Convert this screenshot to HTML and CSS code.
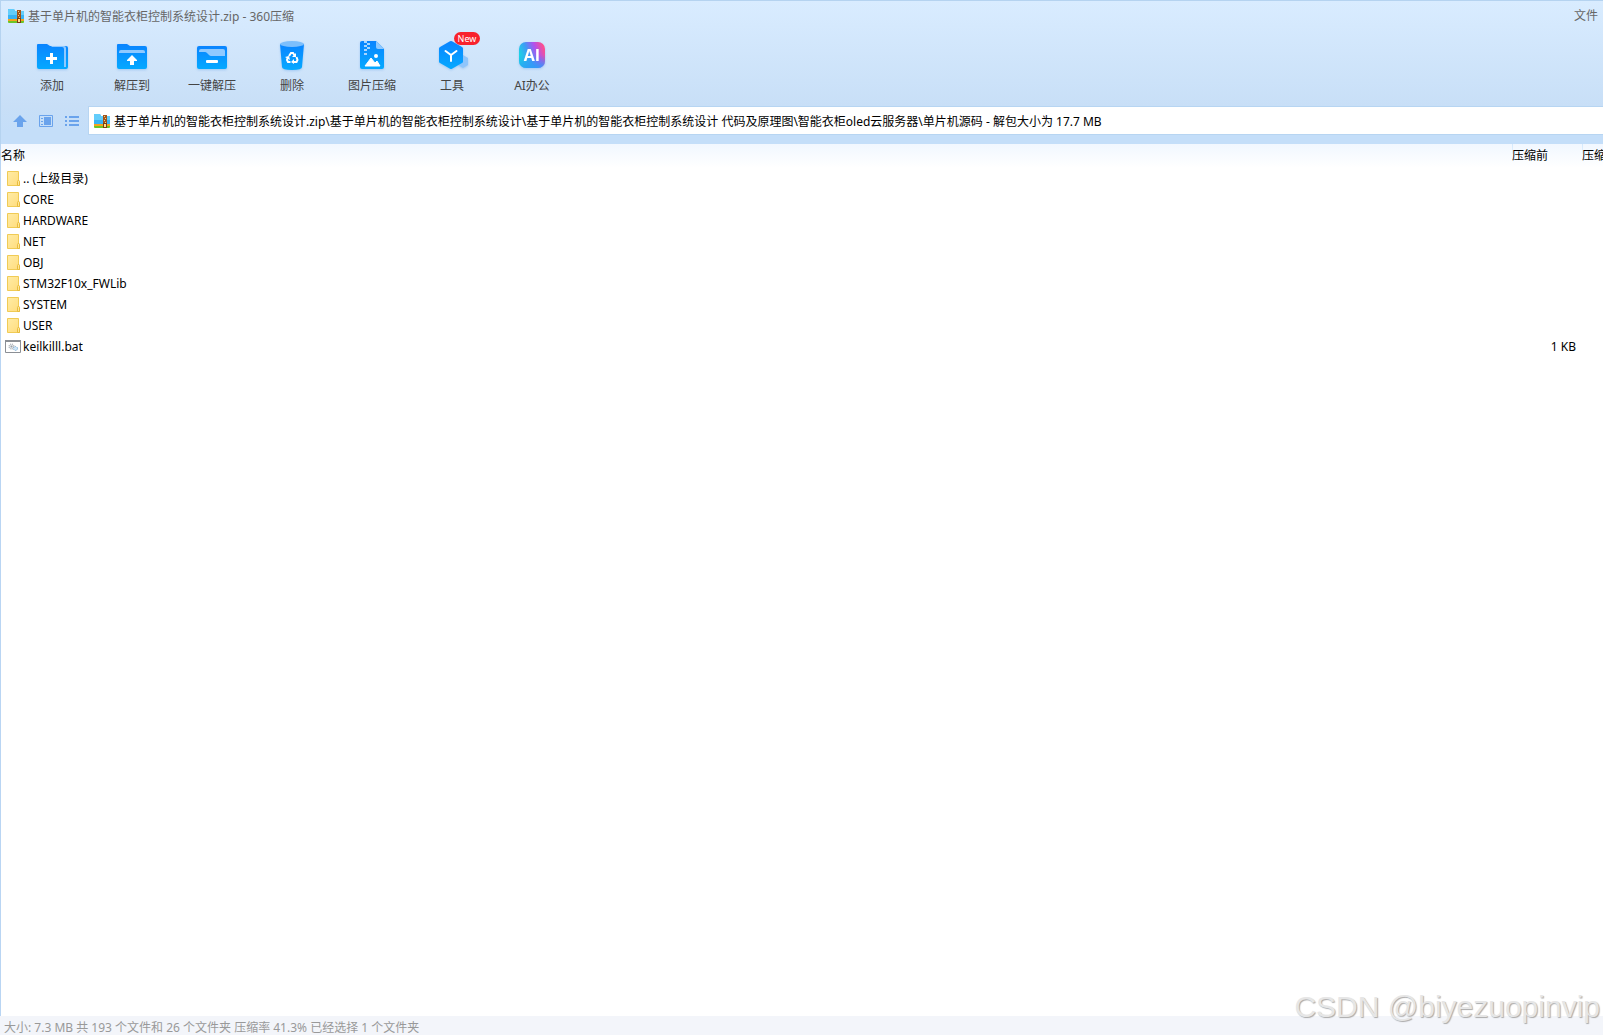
FILE: index.html
```html
<!DOCTYPE html>
<html lang="zh-CN">

<head>
    <meta charset="UTF-8">
    <meta name="viewport" content="width=device-width, initial-scale=1.0">
    <title>基于单片机的智能衣柜控制系统设计.zip - 360压缩</title>
    <link rel="stylesheet" href="styles.css">
</head>

<body>
    <!-- shared icons -->
    <svg class="defs" width="0" height="0" aria-hidden="true">
        <defs>
            <linearGradient id="blue" x1="0" y1="0" x2="0" y2="1">
                <stop offset="0" stop-color="#0a84ff" />
                <stop offset="1" stop-color="#05a9ff" />
            </linearGradient>
            <linearGradient id="ai" x1="0" y1="0.7" x2="1" y2="0.3">
                <stop offset="0" stop-color="#12e3e0" />
                <stop offset="0.4" stop-color="#3f9bf5" />
                <stop offset="0.7" stop-color="#b052ee" />
                <stop offset="1" stop-color="#ff4f8b" />
            </linearGradient>
            <linearGradient id="ai-low" x1="0" y1="0" x2="0" y2="1">
                <stop offset="0.5" stop-color="#2f8ff8" stop-opacity="0" />
                <stop offset="1" stop-color="#2f9cf8" stop-opacity="0.9" />
            </linearGradient>
            <linearGradient id="yellow" x1="0" y1="0" x2="1" y2="1">
                <stop offset="0" stop-color="#ffeca6" />
                <stop offset="1" stop-color="#ffdc7c" />
            </linearGradient>
        </defs>
        <symbol id="zip" viewBox="0 0 16 16">
            <path d="M0 2q0-1 1-1h5l1 2h8q1 0 1 1v8H0z" fill="#38b3f5" />
            <path d="M0 2q0-1 1-1h5l1 2h8q1 0 1 1v3H0z" fill="#63cdfb" />
            <path d="M0 11h16v2H0z" fill="#f5a31c" />
            <path d="M0 13h16v1q0 1-1 1H1q-1 0-1-1z" fill="#6cc526" />
            <path d="M9 2h4v9H9z" fill="#a1541b" />
            <path d="M10 3h1v1h-1zm1 2h1v1h-1zm-1 2h1v1h-1zm1 2h1v1h-1z" fill="#f3cb7c" />
            <path d="M9 10h4v5H9z" fill="#7a3d12" />
            <path d="M10 11h2v3h-2z" fill="#ffe08a" />
        </symbol>
        <symbol id="folder" viewBox="0 0 16 16">
            <path d="M2.500.500h11v9l1 1v4h-12z" fill="url(#yellow)" stroke="#f0cb55" />
            <path d="M12.500 14.500v-4l1-1.500 1 1.500v4z" fill="#ffe596" stroke="#e8bd3f" />
        </symbol>
    </svg>

    <header class="top">
        <div class="titlebar">
            <svg class="small-icon" aria-hidden="true"><use href="#zip" /></svg>
            <h1>基于单片机的智能衣柜控制系统设计.zip - 360压缩</h1>
            <button type="button" class="menu">文件</button>
        </div>

        <nav class="toolbar">
            <button type="button" class="tool">
                <svg viewBox="0 0 32 32" aria-hidden="true">
                    <path d="M1 7q0-1 1-1h9l3 2h16q2 0 2 2v19q0 2-2 2H3q-2 0-2-2z" fill="url(#blue)" />
                    <path d="M15 8h13q2 0 2 2v19h-2V11q0-2-2-2H16z" fill="#8fc9ff" />
                    <path d="M14 15h3v4h4v3h-4v4h-3v-4h-4v-3h4z" fill="#fff" />
                </svg>
                <span>添加</span>
            </button>
            <button type="button" class="tool">
                <svg viewBox="0 0 32 32" aria-hidden="true">
                    <path d="M1 7q0-1 1-1h9l3 2h15q2 0 2 2v19q0 2-2 2H3q-2 0-2-2z" fill="url(#blue)" />
                    <path d="M3 15v-1q0-2 2-2h22q2 0 2 2v1z" fill="#8fc9ff" />
                    <path d="M16 17l5 5v1h-3v4h-4v-4h-3v-1z" fill="#fff" />
                </svg>
                <span>解压到</span>
            </button>
            <button type="button" class="tool">
                <svg viewBox="0 0 32 32" aria-hidden="true">
                    <path d="M1 10q0-2 2-2h26q2 0 2 2v19q0 2-2 2H3q-2 0-2-2z" fill="url(#blue)" />
                    <path d="M3 13q0-2 2-2h22q2 0 2 2v5H15q-1 0-2-1l-2-2q-1-1-2-1H3z" fill="#8fc9ff" />
                    <rect x="10" y="22" width="12" height="3" rx="1" fill="#fff" />
                </svg>
                <span>一键解压</span>
            </button>
            <button type="button" class="tool">
                <svg viewBox="0 0 32 32" aria-hidden="true">
                    <path d="M4 6h24l-2 23q0 3-10 3T6 29z" fill="url(#blue)" />
                    <ellipse cx="16" cy="6" rx="12" ry="3" fill="#7dbffc" />
                    <g fill="none" stroke="#fff" stroke-width="2">
                        <path d="M13 18l2-3h2l2 3" />
                        <path d="M20.500 19l1 3-1 2h-3.500" />
                        <path d="M14.500 24H12l-1-2 1-3" />
                    </g>
                    <path d="M20 15v4h-4zM18 21v5l-3-2zM9 19l4-1 1 4z" fill="#fff" />
                </svg>
                <span>删除</span>
            </button>
            <button type="button" class="tool">
                <svg viewBox="0 0 32 32" aria-hidden="true">
                    <path d="M4 5q0-2 2-2h14l8 8v18q0 2-2 2H6q-2 0-2-2z" fill="url(#blue)" />
                    <path d="M20 3l8 8h-6q-2 0-2-2z" fill="#8fc9ff" />
                    <path d="M8 3h3v2H8zm3 2h3v2h-3zM8 7h3v2H8zm3 2h3v2h-3zM8 11h3v2H8zm0 4h3v2H8z" fill="#a8d5ff" />
                    <circle cx="20" cy="18" r="2" fill="#fff" />
                    <path d="M9 28l6-8 4 5 2-2 3 5z" fill="#fff" stroke="#fff" stroke-linejoin="round" />
                </svg>
                <span>图片压缩</span>
            </button>
            <button type="button" class="tool">
                <svg viewBox="0 0 32 32" aria-hidden="true">
                    <path d="M27 17l5 3v7l-5 3-5-3v-7z" fill="#8fc5fb" />
                    <path d="M15 3q.5 0 1 .3l10 5.700q1 .5 1 1.500v13q0 1-1 1.500l-10 5.700q-1 .5-2 0L4 25q-1-.5-1-1.500v-13Q3 9.500 4 9l10-5.700q.5-.3 1-.3z" fill="url(#blue)" />
                    <path d="M9.500 13l5.500 4 5.500-4M15 17v6" fill="none" stroke="#fff" stroke-width="2" stroke-linecap="round" />
                </svg>
                <span>工具</span>
                <em class="badge">New</em>
            </button>
            <button type="button" class="tool">
                <svg viewBox="0 0 32 32" aria-hidden="true">
                    <rect x="3" y="4" width="26" height="26" rx="7" fill="url(#ai)" />
                    <rect x="3" y="4" width="26" height="26" rx="7" fill="url(#ai-low)" />
                    <text x="16" y="23" class="ai-mark">AI</text>
                </svg>
                <span>AI办公</span>
            </button>
        </nav>

        <div class="location">
            <button type="button" class="nav-btn" aria-label="上级目录">
                <svg viewBox="0 0 14 14" aria-hidden="true">
                    <path d="M7 1l7 7h-4v5H4V8H0z" fill="#6aa3ec" />
                </svg>
            </button>
            <button type="button" class="nav-btn" aria-label="预览">
                <svg viewBox="0 0 14 14" aria-hidden="true">
                    <path d="M.5 1.500h13v11H.5z" fill="none" stroke="#6aa3ec" />
                    <path d="M2 4h2v1H2zm0 3h2v1H2zm0 3h2v1H2zM5 3h7v8H5z" fill="#6aa3ec" />
                </svg>
            </button>
            <button type="button" class="nav-btn" aria-label="列表">
                <svg viewBox="0 0 14 14" aria-hidden="true">
                    <path d="M0 2h2v2H0zm4 0h10v2H4zM0 6h2v2H0zm4 0h10v2H4zM0 10h2v2H0zm4 0h10v2H4z" fill="#6aa3ec" />
                </svg>
            </button>
            <label class="address">
                <svg class="small-icon" aria-hidden="true"><use href="#zip" /></svg>
                <input type="text" aria-label="路径" value="基于单片机的智能衣柜控制系统设计.zip\基于单片机的智能衣柜控制系统设计\基于单片机的智能衣柜控制系统设计 代码及原理图\智能衣柜oled云服务器\单片机源码 - 解包大小为 17.7 MB">
            </label>
        </div>
    </header>

    <main class="files">
        <table>
            <thead>
                <tr>
                    <th>名称</th>
                    <th class="before">压缩前</th>
                    <th class="after">压缩</th>
                </tr>
            </thead>
            <tbody>
                <tr>
                    <td><div class="name"><svg class="small-icon" aria-hidden="true"><use href="#folder" /></svg>.. (上级目录)</div></td>
                    <td></td>
                    <td></td>
                </tr>
                <tr>
                    <td><div class="name"><svg class="small-icon" aria-hidden="true"><use href="#folder" /></svg>CORE</div></td>
                    <td></td>
                    <td></td>
                </tr>
                <tr>
                    <td><div class="name"><svg class="small-icon" aria-hidden="true"><use href="#folder" /></svg>HARDWARE</div></td>
                    <td></td>
                    <td></td>
                </tr>
                <tr>
                    <td><div class="name"><svg class="small-icon" aria-hidden="true"><use href="#folder" /></svg>NET</div></td>
                    <td></td>
                    <td></td>
                </tr>
                <tr>
                    <td><div class="name"><svg class="small-icon" aria-hidden="true"><use href="#folder" /></svg>OBJ</div></td>
                    <td></td>
                    <td></td>
                </tr>
                <tr>
                    <td><div class="name"><svg class="small-icon" aria-hidden="true"><use href="#folder" /></svg>STM32F10x_FWLib</div></td>
                    <td></td>
                    <td></td>
                </tr>
                <tr>
                    <td><div class="name"><svg class="small-icon" aria-hidden="true"><use href="#folder" /></svg>SYSTEM</div></td>
                    <td></td>
                    <td></td>
                </tr>
                <tr>
                    <td><div class="name"><svg class="small-icon" aria-hidden="true"><use href="#folder" /></svg>USER</div></td>
                    <td></td>
                    <td></td>
                </tr>
                <tr>
                    <td>
                        <div class="name">
                            <svg class="small-icon" viewBox="0 0 16 16" aria-hidden="true">
                                <path d="M.5 1.500h15v12H.5z" fill="#fff" stroke="#8b8f95" />
                                <path d="M0 1h16v2H0z" fill="#8b8f95" />
                                <circle cx="6.500" cy="7.500" r="2.500" fill="#e4e8ec" stroke="#8d949c" stroke-dasharray="1 1" />
                                <circle cx="6.500" cy="7.500" r="1" fill="#9aa1a8" />
                                <circle cx="10.500" cy="9.500" r="2" fill="#cfe6f8" stroke="#6fa8d4" stroke-dasharray="1 1" />
                            </svg>keilkilll.bat
                        </div>
                    </td>
                    <td class="size">1 KB</td>
                    <td></td>
                </tr>
            </tbody>
        </table>
    </main>

    <footer class="status">大小: 7.3 MB 共 193 个文件和 26 个文件夹 压缩率 41.3% 已经选择 1 个文件夹</footer>

    <div class="watermark">CSDN @biyezuopinvip</div>
</body>

</html>
```
FILE: styles.css
```css
* {
    box-sizing: border-box;
}

body {
    display: flex;
    flex-direction: column;
    min-height: 100vh;
    margin: 0;
    overflow-x: hidden;
    font-family: "Noto Sans", "Noto Sans CJK SC", sans-serif;
    font-size: 12px;
    line-height: 16px;
    color: #000;
    background: #fff;
}

button,
input {
    margin: 0;
    padding: 0;
    border: none;
    background: none;
    font: inherit;
    color: inherit;
}

button {
    cursor: pointer;
}

.defs {
    position: absolute;
}

.small-icon {
    flex: none;
    width: 16px;
    height: 16px;
}

/* title, toolbar and address */
.top {
    border-top: 1px solid #b5d3f0;
    border-left: 1px solid #b5d3f0;
    background: linear-gradient(#d9ecff, #c8dff7 105px, #c4def9 130px);
}

.titlebar {
    display: flex;
    align-items: center;
    gap: 4px;
    height: 30px;
    padding: 0 5px 0 7px;
    color: #666;
}

.titlebar h1 {
    flex: 1;
    margin: 0;
    padding-top: 2px;
    font-size: 12px;
    font-weight: normal;
}

.toolbar {
    display: flex;
    height: 75px;
    padding: 7px 0 0 11px;
}

.tool {
    position: relative;
    display: flex;
    flex-direction: column;
    align-items: center;
    gap: 8px;
    width: 80px;
    color: #444;
}

.tool svg {
    width: 32px;
    height: 32px;
    filter: drop-shadow(0 1px 1px rgba(60, 140, 230, 0.3));
}

.ai-mark {
    font-family: "Open Sans", sans-serif;
    font-size: 16px;
    font-weight: bold;
    text-anchor: middle;
    fill: #fff;
}

.badge {
    position: absolute;
    top: -6px;
    left: 42px;
    width: 26px;
    height: 13px;
    border-radius: 7px;
    background: #f8222c;
    font-size: 9px;
    font-style: normal;
    line-height: 13px;
    text-align: center;
    color: #fff;
}

.location {
    display: flex;
    align-items: center;
    gap: 12px;
    padding: 0 0 9px 12px;
}

.nav-btn {
    width: 14px;
    height: 14px;
}

.nav-btn svg {
    display: block;
    width: 14px;
    height: 14px;
}

.address {
    display: flex;
    flex: 1;
    align-items: center;
    gap: 4px;
    height: 29px;
    margin-left: -3px;
    padding-left: 5px;
    border: 1px solid #b7d5f2;
    border-right: none;
    background: #fff;
}

.address input {
    flex: 1;
    min-width: 0;
    padding-top: 2px;
    outline: none;
}

/* file list */
.files {
    flex: 1;
    border-left: 1px solid #b9d5f3;
}

table {
    width: 100%;
    table-layout: fixed;
    border-collapse: collapse;
}

thead {
    background: linear-gradient(#f1f7ff, #fff);
}

th {
    height: 24px;
    padding: 0;
    font-weight: normal;
    text-align: left;
    white-space: nowrap;
    overflow: hidden;
}

.before,
.after {
    background: linear-gradient(#d3e8fc, #e8f3fe) no-repeat left top / 1px 10px;
}

.before {
    width: 70px;
}

.after {
    width: 21px;
}

td {
    height: 21px;
    padding: 0;
}

.name {
    display: flex;
    align-items: center;
    gap: 2px;
    padding-left: 4px;
}

.size {
    padding-right: 6px;
    text-align: right;
}

.status {
    height: 19px;
    padding: 4px 4px 0;
    overflow: hidden;
    background: #f3f5fa;
    color: #999;
}

.watermark {
    position: absolute;
    right: 3px;
    bottom: 10px;
    font-family: "Liberation Sans", Arial, sans-serif;
    font-size: 30px;
    line-height: 36px;
    color: #e6e6e6;
    text-shadow: 1px 1px 1px #aaa;
    pointer-events: none;
}
```
